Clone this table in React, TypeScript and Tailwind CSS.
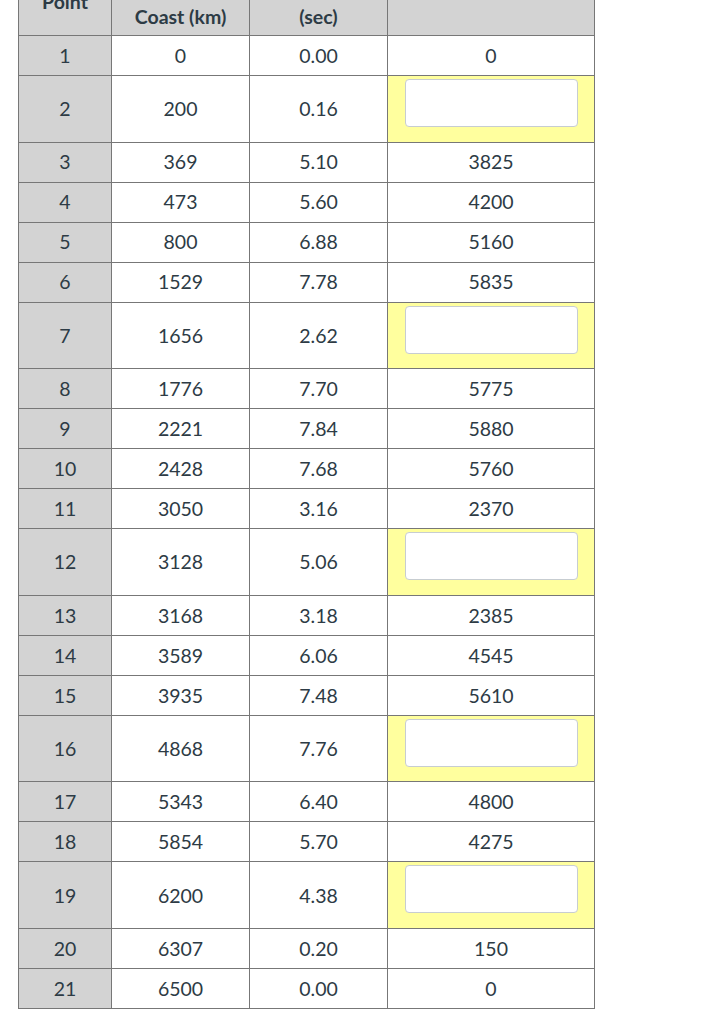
import React from "react";

type Row = { n: number; d: string; t: string; v: string | null };

const rows: Row[] = [
  { n: 1, d: "0", t: "0.00", v: "0" },
  { n: 2, d: "200", t: "0.16", v: null },
  { n: 3, d: "369", t: "5.10", v: "3825" },
  { n: 4, d: "473", t: "5.60", v: "4200" },
  { n: 5, d: "800", t: "6.88", v: "5160" },
  { n: 6, d: "1529", t: "7.78", v: "5835" },
  { n: 7, d: "1656", t: "2.62", v: null },
  { n: 8, d: "1776", t: "7.70", v: "5775" },
  { n: 9, d: "2221", t: "7.84", v: "5880" },
  { n: 10, d: "2428", t: "7.68", v: "5760" },
  { n: 11, d: "3050", t: "3.16", v: "2370" },
  { n: 12, d: "3128", t: "5.06", v: null },
  { n: 13, d: "3168", t: "3.18", v: "2385" },
  { n: 14, d: "3589", t: "6.06", v: "4545" },
  { n: 15, d: "3935", t: "7.48", v: "5610" },
  { n: 16, d: "4868", t: "7.76", v: null },
  { n: 17, d: "5343", t: "6.40", v: "4800" },
  { n: 18, d: "5854", t: "5.70", v: "4275" },
  { n: 19, d: "6200", t: "4.38", v: null },
  { n: 20, d: "6307", t: "0.20", v: "150" },
  { n: 21, d: "6500", t: "0.00", v: "0" },
];

export default function App() {
  return (
    <div
      className="w-[704px] h-[1024px] overflow-hidden bg-white text-[#2d3b45]"
      style={{ fontFamily: "Lato, 'Noto Sans', sans-serif" }}
    >
      <div className="pl-[18px] mt-[-62px]">
        <table className="border-collapse w-[576px] table-fixed text-[19.5px]">
          <colgroup>
            <col className="w-[93px]" />
            <col className="w-[138px]" />
            <col className="w-[138px]" />
            <col className="w-[207px]" />
          </colgroup>
          <thead>
            <tr className="h-[97px] bg-[#d3d3d3]">
              <th className="border border-[#777] font-bold align-bottom pb-[18px] leading-[30px] text-center">
                Data
                <br />
                Point
              </th>
              <th className="border border-[#777] font-bold align-bottom pb-[3px] leading-[30px] text-center">
                Distance
                <br />
                Coast (km)
              </th>
              <th className="border border-[#777] font-bold align-bottom pb-[3px] leading-[30px] text-center">
                Time
                <br />
                (sec)
              </th>
              <th className="border border-[#777] font-bold align-top pt-[2px] leading-[24px] text-center">
                Speed
              </th>
            </tr>
          </thead>
          <tbody>
            {rows.map((r) => (
              <tr key={r.n} className={r.v === null ? "h-[66.6px]" : "h-[40px]"}>
                <td className="border border-[#777] bg-[#d3d3d3] text-center align-middle">{r.n}</td>
                <td className="border border-[#777] text-center align-middle">{r.d}</td>
                <td className="border border-[#777] text-center align-middle">{r.t}</td>
                {r.v === null ? (
                  <td className="border border-[#777] bg-[#ffff9e] align-top pt-[3px]">
                    <div className="flex justify-center">
                      <input
                        type="text"
                        className="w-[173px] h-[48px] bg-white border border-[#c7cdd1] rounded-[4px] outline-none"
                      />
                    </div>
                  </td>
                ) : (
                  <td className="border border-[#777] text-center align-middle">{r.v}</td>
                )}
              </tr>
            ))}
          </tbody>
        </table>
      </div>
    </div>
  );
}
